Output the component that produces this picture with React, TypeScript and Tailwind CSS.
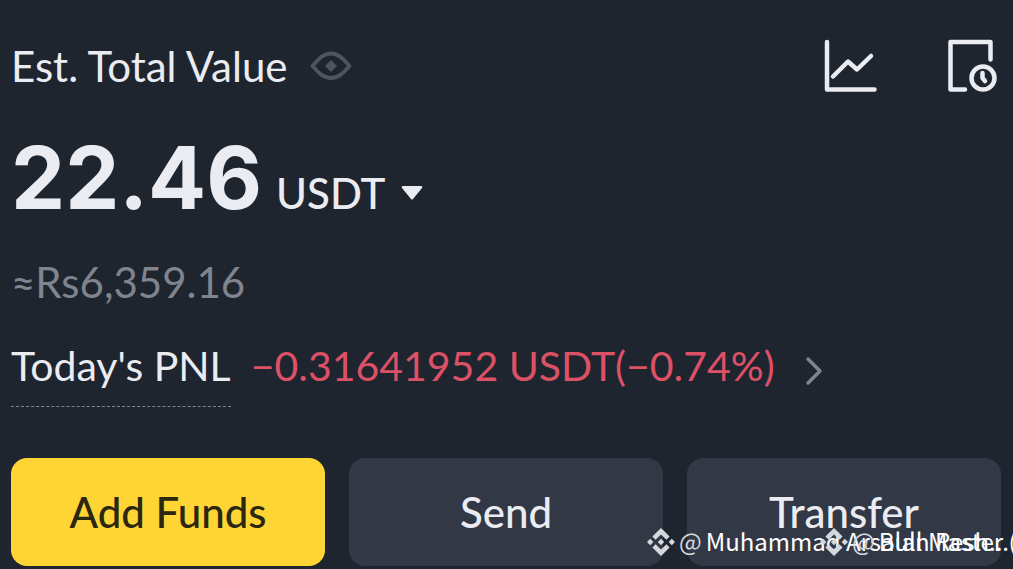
import { ReactNode } from 'react';

const ACTIONS = [
  { label: 'Add Funds', primary: true },
  { label: 'Send', primary: false },
  { label: 'Transfer', primary: false },
];

function EyeIcon() {
  return (
    <svg width="42" height="30" viewBox="0 0 42 30" fill="none">
      <path d="M2.500 15C8 9 13 2.500 21 2.500S34 9 39.500 15C34 21 29 27 21 27S8 21 2.500 15Z" stroke="#4f5560" strokeWidth="3.800" strokeLinejoin="round" />
      <path d="M21 9l6 6-6 6-6-6z" fill="#4f5560" />
    </svg>
  );
}

function ChartIcon() {
  return (
    <svg width="54" height="54" viewBox="0 0 54 54" fill="none" stroke="#eaecf1" strokeWidth="4.500" strokeLinecap="round" strokeLinejoin="round">
      <path d="M4 3v47.500H51.500" />
      <path d="M10 37.500L25 22.500l9 8L48 17" />
    </svg>
  );
}

function HistoryIcon() {
  return (
    <svg width="50" height="54" viewBox="0 0 50 54" fill="none" stroke="#eaecf1" strokeWidth="4.500" strokeLinecap="round" strokeLinejoin="round">
      <path d="M18 50.500H3.500V3H43.500V20.500" />
      <circle cx="36" cy="39" r="11.500" />
      <path d="M35.500 34v5l2.500 3" />
    </svg>
  );
}

function BinanceIcon() {
  return (
    <svg width="28" height="28" viewBox="0 0 28 28" fill="#d5d8dd" className="shrink-0">
      <path d="M14 0l8.600 8.600-3.200 3.200L14 6.400l-5.400 5.400-3.200-3.200z" />
      <path d="M14 28l8.600-8.600-3.200-3.200L14 21.600l-5.400-5.400-3.200 3.200z" />
      <path d="M14 10.800l3.200 3.200-3.200 3.200-3.200-3.200zM3.200 10.800L6.400 14l-3.200 3.200L0 14zM24.800 10.800L28 14l-3.200 3.200-3.200-3.200z" />
    </svg>
  );
}

function Watermark({ children }: { children: ReactNode }) {
  return (
    <div className="flex items-center whitespace-nowrap font-['Noto_Sans_CJK_SC','Noto_Sans',sans-serif] text-2xl leading-8 text-white">
      <BinanceIcon />
      <span className="ml-1 pb-0.5 text-[#d5d8dd]">@</span>
      <span className="ml-1 pb-0.5">{children}</span>
    </div>
  );
}

export default function App() {
  return (
    <main className="relative min-h-screen overflow-hidden bg-[#1f252f] pt-[38px] pr-3 pl-[11px] font-[Lato,sans-serif] text-[#eaecf1]">
      <header className="flex h-14 items-center justify-between">
        <div className="flex items-center gap-[22px]">
          <h1 className="text-[42px] leading-12">Est. Total Value</h1>
          <button aria-label="Hide balance"><EyeIcon /></button>
        </div>
        <div className="flex items-center gap-[70px] pr-1">
          <button aria-label="Profit chart"><ChartIcon /></button>
          <button aria-label="History"><HistoryIcon /></button>
        </div>
      </header>

      <div className="mt-9 flex items-baseline">
        <span className="font-[Inter,sans-serif] text-[86px] leading-24 font-bold">22.46</span>
        <button className="ml-3.5 flex items-center gap-4 text-[42px] leading-12 font-medium">
          USDT
          <svg width="22" height="14" viewBox="0 0 22 14" fill="#eaecf1">
            <path d="M2 0h18q2 0 1 2L12 13q-1 1-2 0L1 2Q0 0 2 0z" />
          </svg>
        </button>
      </div>

      <p className="mt-8 text-[42px] leading-12 text-[#80848f]">≈Rs6,359.16</p>

      <a href="#pnl" className="mt-9 flex items-start text-[41px] leading-12">
        <span className="border-b border-dashed border-[#80848f] pb-4">Today's PNL</span>
        <span className="ml-5 text-[#dc5166]">−0.31641952 USDT(−0.74%)</span>
        <svg width="18" height="30" viewBox="0 0 18 30" fill="none" className="mt-3.5 ml-[30px]">
          <path d="M3 3l12 12L3 27" stroke="#80848f" strokeWidth="3.500" strokeLinecap="round" strokeLinejoin="round" />
        </svg>
      </a>

      <div className="mt-[51px] grid grid-cols-3 gap-6">
        {ACTIONS.map(a => (
          <button
            key={a.label}
            className={`h-27 rounded-2xl text-[42px] font-medium ${a.primary ? 'bg-[#ffd535] text-[#2b2711]' : 'bg-[#323845]'}`}
          >
            {a.label}
          </button>
        ))}
      </div>

      <div className="absolute right-1 bottom-2.5"><Watermark>Muhammad Arsalan Resh...</Watermark></div>
      <div className="absolute bottom-2.5 left-[820px]"><Watermark>Bull Master (</Watermark></div>
    </main>
  );
}
